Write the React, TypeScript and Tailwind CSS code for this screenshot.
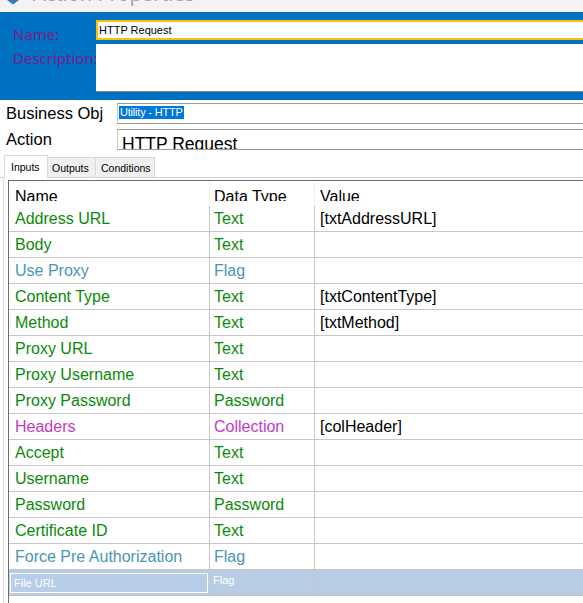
import React from 'react';

type Row = [string, string, string, 'g' | 'b' | 'm'];

const rows: Row[] = [
  ['Address URL', 'Text', '[txtAddressURL]', 'g'],
  ['Body', 'Text', '', 'g'],
  ['Use Proxy', 'Flag', '', 'b'],
  ['Content Type', 'Text', '[txtContentType]', 'g'],
  ['Method', 'Text', '[txtMethod]', 'g'],
  ['Proxy URL', 'Text', '', 'g'],
  ['Proxy Username', 'Text', '', 'g'],
  ['Proxy Password', 'Password', '', 'g'],
  ['Headers', 'Collection', '[colHeader]', 'm'],
  ['Accept', 'Text', '', 'g'],
  ['Username', 'Text', '', 'g'],
  ['Password', 'Password', '', 'g'],
  ['Certificate ID', 'Text', '', 'g'],
  ['Force Pre Authorization', 'Flag', '', 'b'],
];

const colorClass = {
  g: 'text-[#0a8a0a]',
  b: 'text-[#4996b4]',
  m: 'text-[#c23cc2]',
};

export default function App() {
  return (
    <div className="w-[583px] h-[603px] overflow-hidden bg-white font-['Liberation_Sans',Arial,sans-serif]">
      {/* Title bar */}
      <div className="h-[12px] bg-[#f3f3f3] overflow-hidden flex items-start">
        <svg width="14" height="6" viewBox="0 0 14 6" className="ml-[7px] shrink-0">
          <path d="M0,0 L12,0 L6,4.5 Z" fill="#3b78c9" />
        </svg>
        <div className="ml-[12px] mt-[-16px] text-[20px] leading-[20px] text-[#a6a6a6] whitespace-nowrap font-['Noto_Sans',sans-serif]">
          Action Properties
        </div>
      </div>

      {/* Blue panel */}
      <div className="h-[88px] bg-[#0070c0] flex">
        <div className="w-[96px] shrink-0 pl-[13px] pt-[12px] font-['Noto_Sans',sans-serif] text-[15px] leading-[20px] text-[#7a1c8c] whitespace-nowrap">
          <div>Name:</div>
          <div className="mt-[4px]">Description:</div>
        </div>
        <div className="flex-1 pt-[8px]">
          <div className="h-[20px] border-2 border-r-0 border-[#ffc000] bg-white flex items-center pl-[1px] text-[11px] leading-[14px] text-black">
            HTTP Request
          </div>
          <div className="mt-[4px] h-[48px] bg-white border-b border-[#8a8a8a]" />
        </div>
      </div>

      {/* Business Obj */}
      <div className="pt-[3px] flex">
        <div className="w-[117px] shrink-0 pl-[6px] h-[21px] text-[16.5px] leading-[21px] text-black whitespace-nowrap">
          Business Obj
        </div>
        <div className="flex-1 h-[21px] border border-r-0 border-[#9a9a9a] border-l-[#c8c8c8] pt-[2px]">
          <div className="ml-[1px] w-fit bg-[#0078d7] text-white text-[11px] leading-[13px] px-[1px] tracking-[-0.2px] whitespace-nowrap">
            Utility - HTTP
          </div>
        </div>
      </div>

      {/* Action */}
      <div className="mt-[5px] flex">
        <div className="w-[117px] shrink-0 pl-[6px] h-[21px] text-[16.5px] leading-[21px] text-black whitespace-nowrap">
          Action
        </div>
        <div className="flex-1 h-[21px] border border-r-0 border-[#9a9a9a] border-l-[#c8c8c8] overflow-hidden">
          <div className="pl-[4px] pt-[4px] text-[17.5px] leading-[20px] text-black whitespace-nowrap">
            HTTP Request
          </div>
        </div>
      </div>

      {/* Tabs */}
      <div className="mt-[5px] h-[23px] flex items-end border-b border-[#cdd7e4] text-[10.5px] text-black">
        <div className="ml-[4px] w-[44px] h-[23px] -mb-px bg-white border border-b-0 border-[#d9d9d9] flex items-center pl-[6px] leading-[14px]">
          Inputs
        </div>
        <div className="w-[48px] h-[20px] bg-[#f0f0f0] border border-l-0 border-b-0 border-[#d9d9d9] flex items-center pl-[4px] leading-[14px]">
          Outputs
        </div>
        <div className="w-[59px] h-[20px] bg-[#f0f0f0] border border-l-0 border-b-0 border-[#d9d9d9] flex items-center pl-[5px] leading-[14px]">
          Conditions
        </div>
      </div>

      {/* Panel */}
      <div className="ml-[3px] border-l border-[#dcdcdc] pl-[4px] pt-[2px] h-[426px]">
        <div className="border-t border-l border-[#6e6e6e] h-full">
          {/* Header */}
          <div className="flex h-[25px] text-[16px] text-black">
            <div className="w-[201px] shrink-0 border-r border-[#f0f0f0]">
              <div className="h-[20px] overflow-hidden pl-[6px] pt-[7px] leading-[18px] whitespace-nowrap">Name</div>
            </div>
            <div className="w-[105px] shrink-0 border-r border-[#f0f0f0]">
              <div className="h-[20px] overflow-hidden pl-[4px] pt-[7px] leading-[18px] whitespace-nowrap">Data Type</div>
            </div>
            <div className="flex-1">
              <div className="h-[20px] overflow-hidden pl-[5px] pt-[7px] leading-[18px] whitespace-nowrap">Value</div>
            </div>
          </div>

          {rows.map(([name, type, value, c]) => (
            <div key={name} className="flex h-[26px] border-b border-[#c8c8c8] text-[16px] leading-[25px] whitespace-nowrap">
              <div className={`w-[201px] shrink-0 border-r border-[#c8c8c8] pl-[6px] ${colorClass[c]}`}>{name}</div>
              <div className={`w-[105px] shrink-0 border-r border-[#c8c8c8] pl-[4px] ${colorClass[c]}`}>{type}</div>
              <div className="flex-1 pl-[5px] text-black">{value}</div>
            </div>
          ))}

          {/* Selected row */}
          <div className="flex h-[26px] border-b border-[#c0c0c0] bg-[#b8cce4] whitespace-nowrap">
            <div className="w-[201px] shrink-0 border-r border-[#c8c8c8] pl-[1px] pt-[3px]">
              <div className="w-[198px] h-[20px] border border-white bg-[#b8cde8] text-white text-[11px] leading-[18px] pl-[3px]">
                File URL
              </div>
            </div>
            <div className="w-[105px] shrink-0 border-r border-[#c8c8c8] pl-[3px] pt-[4px] text-white text-[11px] leading-[13px]">
              Flag
            </div>
            <div className="flex-1" />
          </div>
        </div>
      </div>
    </div>
  );
}
